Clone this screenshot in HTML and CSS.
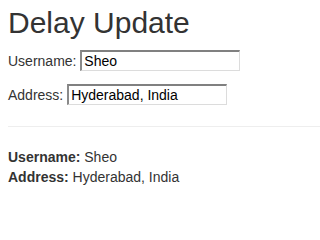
FILE: index.html
```html
<!DOCTYPE html>
<html>
<head>
<meta charset="utf-8">
<link rel="stylesheet" href="styles.css">
</head>
<body>
<div class="page">
  <h2 class="title">Delay Update</h2>
  <div class="field"><label>Username:</label> <input class="box box-user" type="text" value="Sheo"></div>
  <div class="field"><label>Address:</label> <input class="box" type="text" value="Hyderabad, India"></div>
  <hr class="rule">
  <div class="result"><b>Username:</b> Sheo</div>
  <div class="result"><b>Address:</b> Hyderabad, India</div>
</div>
</body>
</html>
```
FILE: styles.css
```css
html, body {
  margin: 0;
  padding: 0;
  background: #fff;
}
.page {
  padding: 6px 0 0 8px;
  font-family: "Liberation Sans", Arial, sans-serif;
  font-size: 14px;
  color: #333;
}
.title {
  margin: 0 0 11px 0;
  font-size: 30px;
  font-weight: normal;
  line-height: 33px;
  color: #333;
}
.field {
  height: 21px;
  line-height: 21px;
  margin-bottom: 13px;
  white-space: nowrap;
}
.box {
  box-sizing: border-box;
  width: 160px;
  height: 21px;
  margin: 0;
  padding: 0 2px;
  font-family: "Liberation Sans", Arial, sans-serif;
  font-size: 14px;
  color: #000;
  background: #fff;
  border-style: solid;
  border-width: 2px 1px 1px 2px;
  border-color: #808080 #dcdcdc #dcdcdc #8a8a8a;
  vertical-align: baseline;
  outline: none;
}
.rule {
  margin: 21px 0 20px 0;
  height: 0;
  border: 0;
  border-top: 1px solid #eee;
}
.result {
  line-height: 20px;
}
.result b {
  font-weight: bold;
}
```
